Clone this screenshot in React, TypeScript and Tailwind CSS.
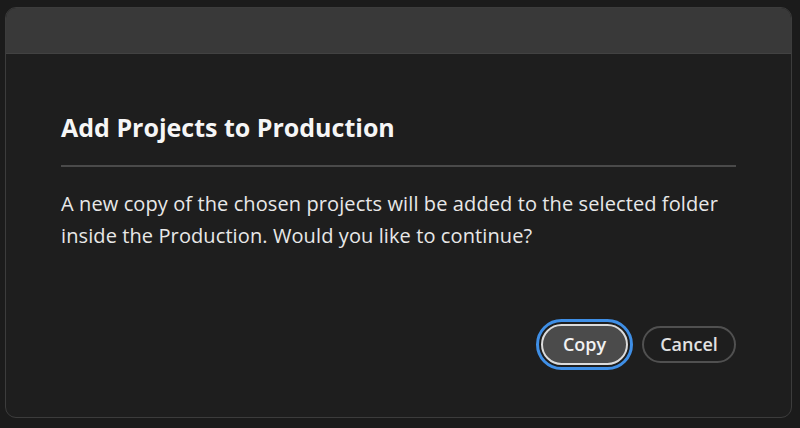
export default function App() {
  return (
    <div className="w-[800px] h-[428px] bg-[#1b1b1b] pt-[7px] pl-[5px] pr-[8px] pb-[10px] flex" style={{ fontFamily: '"Open Sans", sans-serif' }}>
      <div className="flex-1 flex flex-col rounded-[11px] border border-[#3c3c3c] bg-[#1e1e1e] overflow-hidden">
        <div className="h-[46px] shrink-0 bg-[#393939] border-b border-[#424242]" />
        <div className="flex-1 flex flex-col px-[55px] pt-[57px]">
          <h1 className="text-[25px] leading-[32px] font-bold text-[#f6f6f6]">Add Projects to Production</h1>
          <div className="mt-[22px] h-[2px] bg-[#4a4a4a]" />
          <p className="mt-[21px] text-[20px] leading-[32px] text-[#e8e8e8] tracking-[0.1px]">
            A new copy of the chosen projects will be added to the selected folder
            <br />
            inside the Production. Would you like to continue?
          </p>
          <div className="mt-auto mb-[47px] flex justify-end items-center gap-[9px]">
            <div className="rounded-full border-[3px] border-[#3f8fe6] p-[2px]">
              <button className="h-[41px] w-[87px] rounded-full border-2 border-[#dcdcdc] bg-[#4b4b4b] text-[18px] font-semibold text-[#f2f2f2]">
                Copy
              </button>
            </div>
            <button className="h-[37px] w-[94px] rounded-full border-2 border-[#505050] bg-transparent text-[18px] font-semibold text-[#e2e2e2]">
              Cancel
            </button>
          </div>
        </div>
      </div>
    </div>
  );
}
